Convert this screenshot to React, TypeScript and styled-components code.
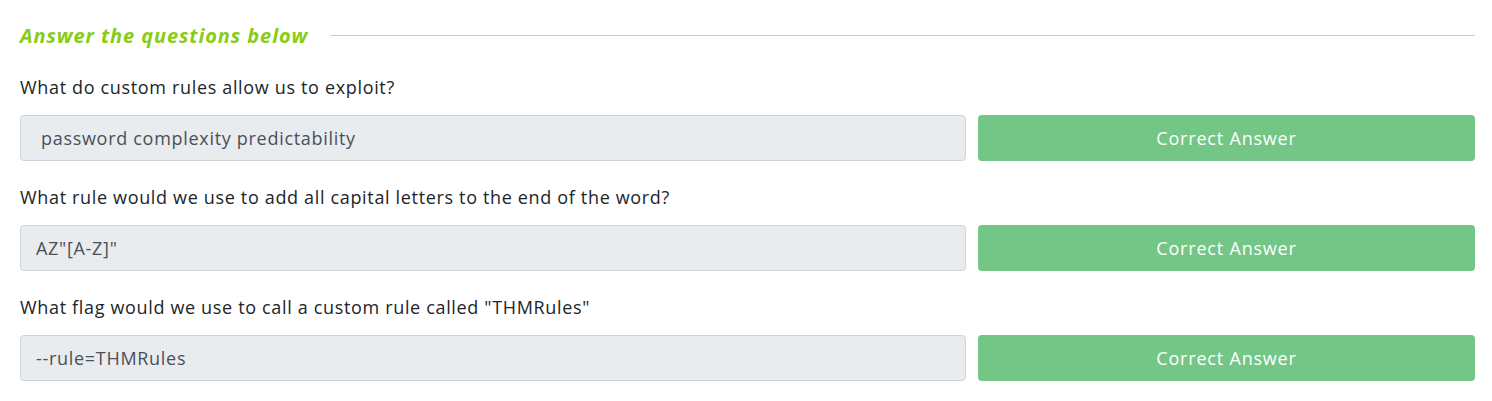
import React from 'react';
import styled, { createGlobalStyle } from 'styled-components';

const GlobalStyle = createGlobalStyle`
  html, body {
    margin: 0;
    padding: 0;
    background: #ffffff;
  }
  body {
    font-family: 'Open Sans', 'Noto Sans', sans-serif;
    color: #212529;
  }
`;

const Wrapper = styled.div`
  padding: 22px 17px 0 20px;
`;

const HeadingRow = styled.div`
  display: flex;
  align-items: center;
  gap: 22px;
  margin-bottom: 24px;
`;

const Heading = styled.h3`
  margin: 0;
  font-size: 20px;
  line-height: 28px;
  font-weight: 700;
  font-style: italic;
  letter-spacing: 0.9px;
  color: #88cc14;
  white-space: nowrap;
`;

const Rule = styled.div`
  flex: 1;
  height: 1px;
  background: #cccccc;
  margin-top: -2px;
`;

const Question = styled.div`
  margin-bottom: 23px;
`;

const QuestionText = styled.p`
  margin: 0 0 14px;
  font-size: 18px;
  line-height: 27px;
  letter-spacing: 0.66px;
  color: #212529;
`;

const AnswerRow = styled.div`
  display: grid;
  grid-template-columns: 946px 1fr;
  gap: 12px;
`;

const AnswerBox = styled.div<{ $inset: number }>`
  box-sizing: border-box;
  height: 46px;
  display: flex;
  align-items: center;
  padding-left: ${(p) => p.$inset}px;
  background: #e9ecef;
  border: 1px solid #ced4da;
  border-radius: 4px;
  font-size: 18px;
  letter-spacing: 0.7px;
  color: #495057;
`;

const SubmitButton = styled.button`
  box-sizing: border-box;
  height: 46px;
  border: none;
  border-radius: 4px;
  background: #73c686;
  color: #ffffff;
  font-family: inherit;
  font-size: 18px;
  letter-spacing: 0.8px;
  cursor: default;
`;

const questions = [
  { q: 'What do custom rules allow us to exploit?', a: 'password complexity predictability', inset: 20 },
  { q: 'What rule would we use to add all capital letters to the end of the word?', a: 'AZ"[A-Z]"', inset: 15 },
  { q: 'What flag would we use to call a custom rule called "THMRules"', a: '--rule=THMRules', inset: 15 },
];

export default function App() {
  return (
    <>
      <GlobalStyle />
      <Wrapper>
        <HeadingRow>
          <Heading>Answer the questions below</Heading>
          <Rule />
        </HeadingRow>
        {questions.map((item) => (
          <Question key={item.q}>
            <QuestionText>{item.q}</QuestionText>
            <AnswerRow>
              <AnswerBox $inset={item.inset}>{item.a}</AnswerBox>
              <SubmitButton disabled>Correct Answer</SubmitButton>
            </AnswerRow>
          </Question>
        ))}
      </Wrapper>
    </>
  );
}
